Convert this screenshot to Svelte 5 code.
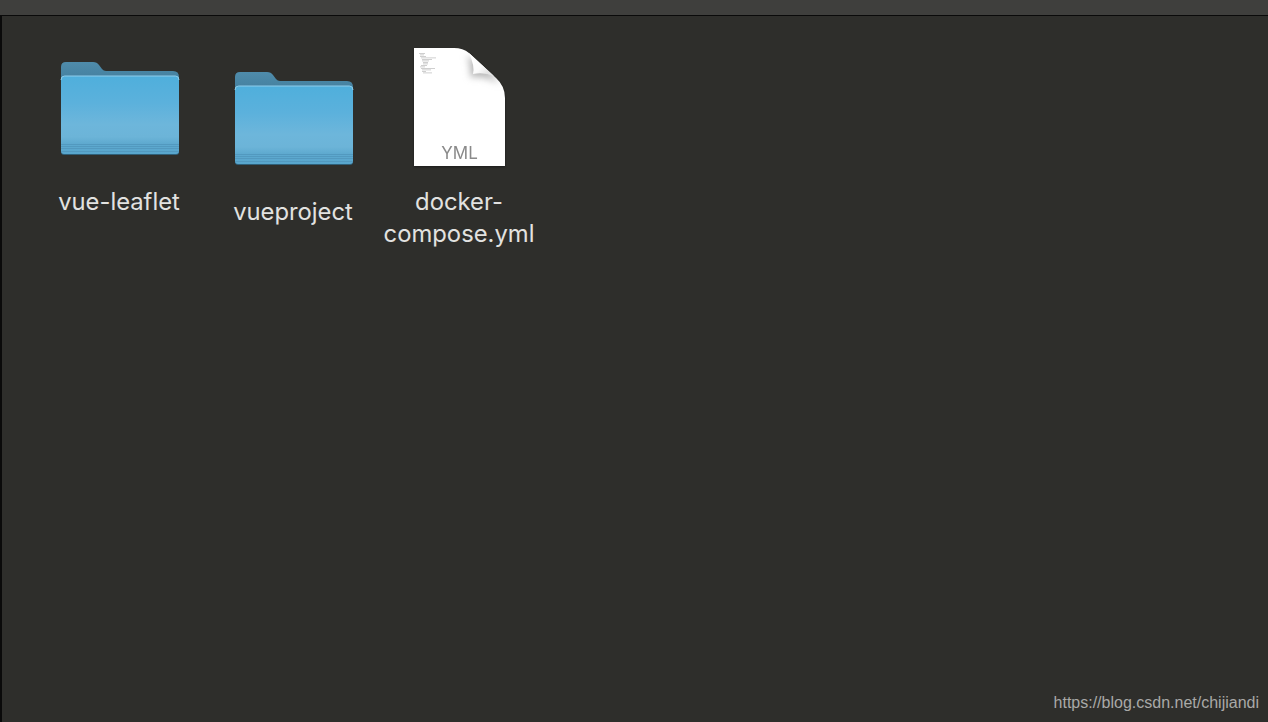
<script>
  // tiny preview lines of the yml thumbnail: [x, y, width]
  const previewLines = [
    [5, 5, 6], [6, 6.500, 4], [6, 8, 6], [7, 9.500, 15], [8, 11, 10], [8, 12.500, 7], [9, 14, 5],
    [9, 15.500, 5], [7, 17, 6], [6, 18.500, 5], [7, 20, 14], [8, 21.500, 9], [8, 23, 4], [9, 24.500, 9]
  ];
</script>

{#snippet folder(id)}
  <svg class="folder" width="120" height="95" viewBox="0 0 120 95">
    <defs>
      <linearGradient id="back-{id}" x1="0" y1="0" x2="0" y2="1">
        <stop offset="0" stop-color="#4f8cab" />
        <stop offset="1" stop-color="#3d7796" />
      </linearGradient>
      <linearGradient id="front-{id}" x1="0" y1="0" x2="0" y2="1">
        <stop offset="0" stop-color="#4fafdc" />
        <stop offset="0.35" stop-color="#5cb1dc" />
        <stop offset="0.62" stop-color="#6db6db" />
        <stop offset="0.78" stop-color="#6cb4d8" />
        <stop offset="0.87" stop-color="#5ea9cf" />
        <stop offset="1" stop-color="#58a6cd" />
      </linearGradient>
    </defs>
    <path
      d="M1 14 V6 Q1 1 6 1 H33 Q37 1 39 4 L42 8 Q43.500 10 46 10 H113 Q119 10 119 16 V30 H1 Z"
      fill="url(#back-{id})"
    />
    <rect x="1" y="15" width="118" height="79" rx="3" fill="#2f5f78" />
    <rect x="1" y="15" width="118" height="78" rx="3" fill="url(#front-{id})" />
    <path d="M1 19 Q1 15 4.500 15 H115.500 Q119 15 119 19" fill="none" stroke="#8fcdea" stroke-width="1" />
    <rect x="1" y="83" width="118" height="1" fill="#5299bf" />
    <rect x="1" y="85" width="118" height="1" fill="#5299bf" />
    <rect x="1" y="87" width="118" height="1" fill="#5299bf" />
    <rect x="1" y="90" width="118" height="1" fill="#5299bf" />
  </svg>
{/snippet}

<main class="window">
  <div class="titlebar"></div>
  <div class="desktop">
    <div class="item first">
      <div class="icon-box">{@render folder("a")}</div>
      <div class="name">vue-leaflet</div>
    </div>
    <div class="item second">
      <div class="icon-box">{@render folder("b")}</div>
      <div class="name">vueproject</div>
    </div>
    <div class="item third">
      <div class="icon-box">
        <svg class="file" width="91" height="118" viewBox="0 0 91 118">
          <defs>
            <linearGradient id="curl" x1="0.1" y1="0.2" x2="0.8" y2="0.8">
              <stop offset="0" stop-color="#ffffff" />
              <stop offset="0.6" stop-color="#fbfbfb" />
              <stop offset="1" stop-color="#e4e4e4" />
            </linearGradient>
            <clipPath id="page">
              <path d="M0 0 H40 Q49 0 55 5 L82 30 Q91 38 91 50 V118 H0 Z" />
            </clipPath>
            <filter id="soft" x="-40%" y="-40%" width="180%" height="180%">
              <feGaussianBlur stdDeviation="3.500" />
            </filter>
          </defs>
          <path d="M0 0 H40 Q49 0 55 5 L82 30 Q91 38 91 50 V118 H0 Z" fill="#fff" />
          <g clip-path="url(#page)">
            <path d="M53 8 Q58 20 56 29 Q72 27 86 36 L70 16 Z" fill="#b4b4b4" filter="url(#soft)" />
          </g>
          <path d="M55 5 Q61 18 59 26 Q70 24 80 28 Z" fill="url(#curl)" />
          {#each previewLines as [x, y, w]}
            <rect {x} {y} width={w} height="0.8" fill="#c4c4c4" />
          {/each}
          <text class="ext" x="45.500" y="111" text-anchor="middle">YML</text>
        </svg>
      </div>
      <div class="name">docker-<br />compose.yml</div>
    </div>
  </div>
  <div class="watermark">https://blog.csdn.net/chijiandi</div>
</main>

<style>
  :global(body) {
    margin: 0;
    background: #2e2e2b;
  }

  .window {
    position: relative;
    width: 1268px;
    height: 722px;
    overflow: hidden;
    background: #2e2e2b;
  }

  .titlebar {
    height: 15px;
    background: #3f3f3d;
    border-bottom: 1px solid #0a0a0a;
  }

  .desktop {
    display: flex;
    align-items: flex-start;
    height: 706px;
    box-sizing: border-box;
    border-left: 2px solid #0a0a0a;
    padding-top: 32px;
  }

  .item {
    width: 160px;
    display: flex;
    flex-direction: column;
    align-items: center;
  }

  .first {
    margin-left: 37px;
  }

  .second {
    margin-left: 14px;
    margin-top: 10px;
  }

  .third {
    margin-left: 6px;
  }

  .icon-box {
    height: 118px;
    display: flex;
    align-items: flex-end;
    justify-content: center;
  }

  .folder {
    margin-bottom: 10px;
    margin-left: 2px;
    display: block;
  }

  .file {
    display: block;
    filter: drop-shadow(0 1px 1px rgba(0, 0, 0, 0.4));
  }

  .ext {
    font-family: Inter, "Liberation Sans", sans-serif;
    font-size: 17px;
    fill: #8a8a8a;
  }

  .name {
    margin-top: 20px;
    width: 170px;
    flex-shrink: 0;
    font-family: Inter, "Liberation Sans", sans-serif;
    font-size: 23.800px;
    line-height: 32px;
    text-align: center;
    color: #e2e2e0;
    white-space: nowrap;
  }

  .watermark {
    position: absolute;
    right: 9px;
    bottom: 10px;
    font-family: "Liberation Sans", Arial, sans-serif;
    font-size: 16px;
    line-height: 18px;
    color: #a9a9a7;
  }
</style>
